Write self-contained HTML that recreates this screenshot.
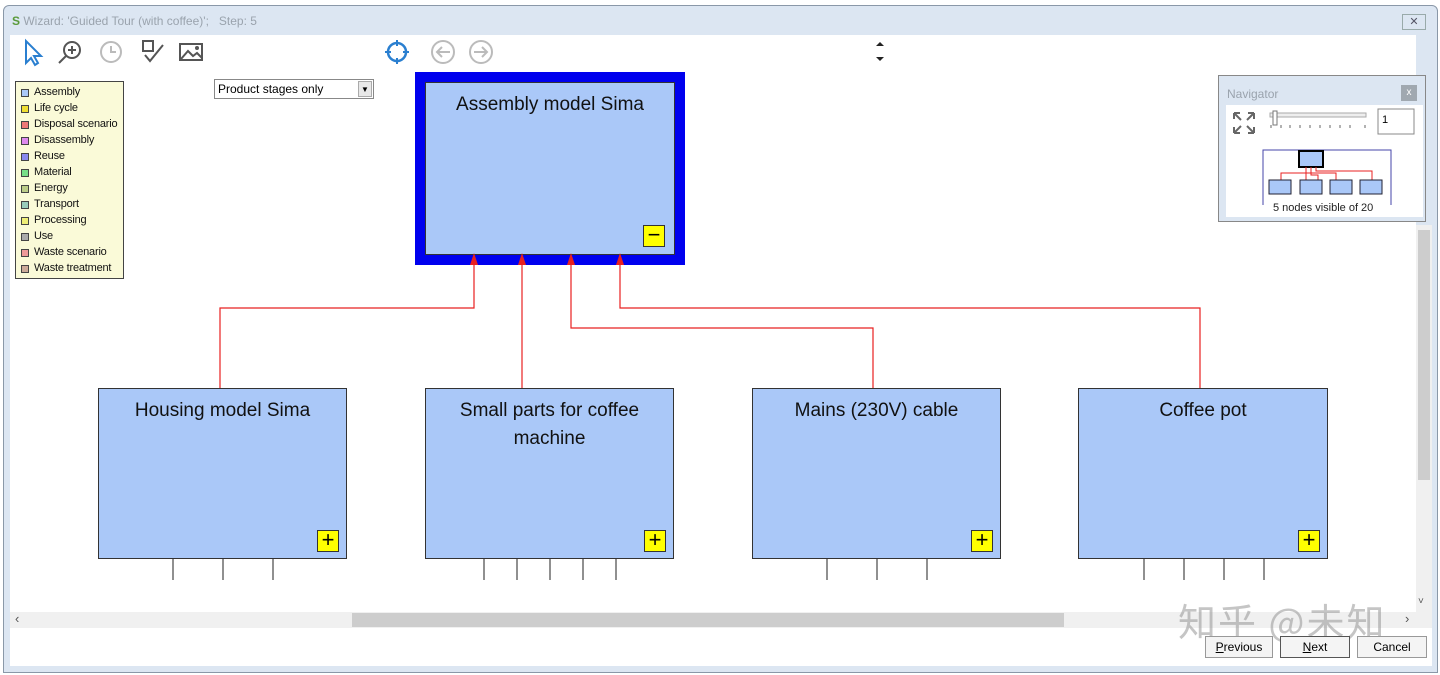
<!DOCTYPE html>
<html><head><meta charset="utf-8"><style>
*{margin:0;padding:0;box-sizing:border-box}
body{width:1440px;height:675px;background:#fff;position:relative;overflow:hidden;font-family:"Liberation Sans","DejaVu Sans",sans-serif}
.a{position:absolute}
.win{left:3px;top:5px;width:1435px;height:668px;background:#dce6f2;border:1px solid #8a98a8;border-radius:6px 6px 0 0}
.node{position:absolute;background:#aac8f8;border:1px solid #333;text-align:center;font-size:19px;color:#111;padding-top:8px;line-height:28px}
.pm{position:absolute;width:22px;height:22px;background:#ffff00;border:1px solid #333;font-size:22px;line-height:18px;text-align:center;color:#000}
.leg div{height:16px;font-size:11px;line-height:16px;padding-left:18px;position:relative;color:#111;white-space:nowrap;letter-spacing:-0.2px}
.leg div i{position:absolute;left:5px;top:5px;width:8px;height:8px;border:1px solid #444}
.btn{position:absolute;top:636px;height:22px;width:70px;border:1px solid #999;background:#f4f4f4;font-size:12px;text-align:center;line-height:20px}
</style></head><body>
<div class="a win"></div>
<div class="a" style="left:12px;top:14px;font-size:12px;color:#9aa3ad">
<span style="color:#5a9a3a;font-weight:bold">S</span> Wizard: 'Guided Tour (with coffee)'; &nbsp;&nbsp;Step: 5</div>
<div class="a" style="left:1402px;top:14px;width:24px;height:16px;border:1px solid #9aa;font-size:11px;text-align:center;line-height:14px;color:#556">✕</div>
<div class="a" style="left:10px;top:35px;width:1406px;height:577px;background:#fff"></div>
<div class="a" style="left:10px;top:628px;width:1422px;height:38px;background:#fff"></div>
<svg class="a" style="left:10px;top:35px" width="900" height="36">
<path d="M16 6 L16 28 L21 23 L25 30 L28 28 L24 21 L31 21 Z" fill="none" stroke="#2a7fd0" stroke-width="2"/>
<circle cx="62" cy="15" r="8" fill="none" stroke="#555" stroke-width="2"/><path d="M56 21 L49 28 M58 15 h8 M62 11 v8" stroke="#555" stroke-width="2"/>
<circle cx="101" cy="17" r="10" fill="none" stroke="#bbb" stroke-width="2"/><path d="M101 11 v6 h5" stroke="#bbb" stroke-width="2" fill="none"/>
<path d="M133 6 h10 v10 h-10 z M135 20 l5 6 l13 -16" fill="none" stroke="#555" stroke-width="2"/>
<rect x="170" y="9" width="22" height="16" fill="none" stroke="#555" stroke-width="2"/><path d="M171 24 l7 -8 l5 5 l4 -3 l5 5" fill="none" stroke="#555" stroke-width="2"/><circle cx="187" cy="13" r="2" fill="#555"/>
<circle cx="387" cy="17" r="9" fill="none" stroke="#2a7fd0" stroke-width="2.5"/><path d="M387 5 v6 M387 23 v6 M375 17 h6 M393 17 h6" stroke="#2a7fd0" stroke-width="2"/>
<circle cx="433" cy="17" r="11" fill="none" stroke="#bbb" stroke-width="2"/><path d="M440 17 h-13 M432 12 l-5 5 l5 5" fill="none" stroke="#bbb" stroke-width="2"/>
<circle cx="471" cy="17" r="11" fill="none" stroke="#bbb" stroke-width="2"/><path d="M464 17 h13 M472 12 l5 5 l-5 5" fill="none" stroke="#bbb" stroke-width="2"/>
<path d="M866 11 l4 -4 l4 4 Z M866 22 l4 4 l4 -4 Z" fill="#222"/>
</svg>
<div class="a leg" style="left:15px;top:81px;width:109px;height:198px;background:#fafad8;border:1px solid #444;padding-top:2px">
<div><i style="background:#aac8f8"></i>Assembly</div>
<div><i style="background:#eedd33"></i>Life cycle</div>
<div><i style="background:#ee7777"></i>Disposal scenario</div>
<div><i style="background:#dd88ee"></i>Disassembly</div>
<div><i style="background:#8888ee"></i>Reuse</div>
<div><i style="background:#77dd88"></i>Material</div>
<div><i style="background:#bbcc88"></i>Energy</div>
<div><i style="background:#99ccbb"></i>Transport</div>
<div><i style="background:#eeee77"></i>Processing</div>
<div><i style="background:#aaaaaa"></i>Use</div>
<div><i style="background:#ee9999"></i>Waste scenario</div>
<div><i style="background:#ccaa99"></i>Waste treatment</div>
</div>
<div class="a" style="left:214px;top:79px;width:160px;height:20px;border:1px solid #888;font-size:12px;line-height:18px;padding-left:3px;background:#fff">Product stages only
<span style="position:absolute;right:1px;top:1px;width:14px;height:16px;background:#e8e8e8;border:1px solid #aaa;font-size:8px;text-align:center;line-height:15px">▼</span></div>
<div class="a" style="left:415px;top:72px;width:270px;height:193px;background:#0000ee"></div>
<div class="node" style="left:425px;top:82px;width:250px;height:173px">Assembly model Sima</div>
<div class="pm" style="left:643px;top:225px">−</div>
<svg class="a" style="left:0;top:0" width="1440" height="675">
<g stroke="#e82020" stroke-width="1.2" fill="none">
<path d="M220 388 V308 H474 V262"/><path d="M522 388 V262"/><path d="M873 388 V328 H571 V262"/><path d="M1200 388 V308 H620 V262"/>
</g>
<g fill="#e82020"><path d="M474 253 l-4 12 h8z"/><path d="M522 253 l-4 12 h8z"/><path d="M571 253 l-4 12 h8z"/><path d="M620 253 l-4 12 h8z"/></g>
<g stroke="#222" stroke-width="1">
<path d="M173 559 v21 M223 559 v21 M273 559 v21"/>
<path d="M484 559 v21 M517 559 v21 M550 559 v21 M583 559 v21 M616 559 v21"/>
<path d="M827 559 v21 M877 559 v21 M927 559 v21"/>
<path d="M1144 559 v21 M1184 559 v21 M1224 559 v21 M1264 559 v21"/>
</g></svg>
<div class="node" style="left:98px;top:388px;width:249px;height:171px">Housing model Sima</div>
<div class="pm" style="left:317px;top:530px">+</div>
<div class="node" style="left:425px;top:388px;width:249px;height:171px">Small parts for coffee<br>machine</div>
<div class="pm" style="left:644px;top:530px">+</div>
<div class="node" style="left:752px;top:388px;width:249px;height:171px">Mains (230V) cable</div>
<div class="pm" style="left:971px;top:530px">+</div>
<div class="node" style="left:1078px;top:388px;width:250px;height:171px">Coffee pot</div>
<div class="pm" style="left:1298px;top:530px">+</div>
<div class="a" style="left:1218px;top:75px;width:208px;height:147px;background:#dce6f2;border:1px solid #888"></div>
<div class="a" style="left:1227px;top:87px;font-size:12px;color:#9aa3ad">Navigator</div>
<div class="a" style="left:1401px;top:85px;width:16px;height:16px;background:#a0a8b0;color:#fff;font-size:10px;text-align:center;line-height:16px">x</div>
<div class="a" style="left:1226px;top:105px;width:197px;height:112px;background:#fff"></div>
<svg class="a" style="left:1226px;top:105px" width="197" height="112">
<g stroke="#666" stroke-width="2" fill="none"><path d="M8 8 h6 M8 8 v6 M8 8 l7 7 M28 8 h-6 M28 8 v6 M28 8 l-7 7 M8 28 h6 M8 28 v-6 M8 28 l7 -7 M28 28 h-6 M28 28 v-6 M28 28 l-7 -7"/></g>
<rect x="44" y="8" width="96" height="4" fill="#eee" stroke="#aaa"/><rect x="47" y="6" width="4" height="14" fill="#fff" stroke="#777"/>
<g stroke="#666"><path d="M45 20v3M55 20v3M64 20v3M74 20v3M84 20v3M94 20v3M104 20v3M114 20v3M124 20v3M139 20v3"/></g>
<rect x="152" y="4" width="36" height="25" fill="#fff" stroke="#888"/><text x="156" y="18" font-size="11">1</text>
<path d="M37 100 V45 H165 V100" fill="none" stroke="#4444aa"/>
<rect x="73" y="46" width="24" height="16" fill="#aac8f8" stroke="#000" stroke-width="2"/>
<g stroke="#e82020" fill="none"><path d="M55 75 v-7 h55 v7 M80 75 v-13 M85 62 v8 h7 v5 M90 62 v4 h56 v9"/></g>
<g fill="#aac8f8" stroke="#223"><rect x="43" y="75" width="22" height="14"/><rect x="74" y="75" width="22" height="14"/><rect x="104" y="75" width="22" height="14"/><rect x="134" y="75" width="22" height="14"/></g>
<text x="47" y="106" font-size="11" fill="#222">5 nodes visible of 20</text>
</svg>
<div class="a" style="left:1416px;top:225px;width:16px;height:387px;background:#f0f0f0"></div>
<div class="a" style="left:1418px;top:230px;width:12px;height:250px;background:#cdcdcd"></div>
<div class="a" style="left:1418px;top:596px;font-size:10px;color:#555">˅</div>
<div class="a" style="left:10px;top:612px;width:1422px;height:16px;background:#f0f0f0"></div>
<div class="a" style="left:352px;top:613px;width:712px;height:14px;background:#cdcdcd"></div>
<div class="a" style="left:15px;top:611px;font-size:13px;color:#555">‹</div>
<div class="a" style="left:1405px;top:611px;font-size:13px;color:#555">›</div>
<div class="a" style="left:1178px;top:592px;font-size:38px;color:rgba(150,150,150,.55);font-family:'Noto Sans CJK SC',sans-serif;letter-spacing:2px">知乎 @未知</div>
<div class="btn" style="left:1205px;width:68px"><u>P</u>revious</div>
<div class="btn" style="left:1280px;border-color:#555"><u>N</u>ext</div>
<div class="btn" style="left:1357px">Cancel</div>
</body></html>
